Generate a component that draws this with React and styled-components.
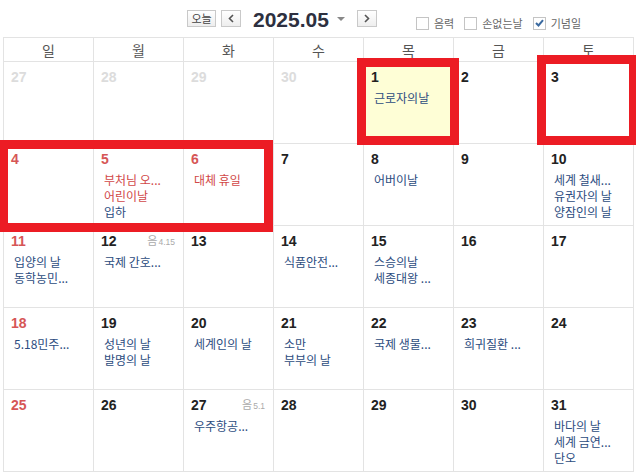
import React from "react";
import styled, { createGlobalStyle } from "styled-components";

const GlobalStyle = createGlobalStyle`
	html, body {
		margin: 0;
		padding: 0;
		background: #fff;
	}
	body {
		font-family: "Noto Sans CJK KR", "Liberation Sans", sans-serif;
		overflow: hidden;
	}
`;

const Page = styled.div`
	position: relative;
	width: 636px;
	height: 476px;
	overflow: hidden;
	background: #fff;
`;

const Toolbar = styled.div`
	display: flex;
	align-items: center;
	height: 37px;
	padding-left: 187px;
	box-sizing: border-box;
`;

const NavButton = styled.button`
	display: flex;
	align-items: center;
	justify-content: center;
	box-sizing: border-box;
	width: ${(p) => p.$w || 20}px;
	height: 17px;
	margin: 0 0 0 ${(p) => p.$ml || 0}px;
	padding: 0;
	border: 1px solid #c9c9c9;
	background: linear-gradient(#ffffff, #eeeeee);
	font-family: "Noto Sans CJK KR", sans-serif;
	font-size: 11px;
	line-height: 15px;
	color: #444;
	cursor: pointer;
`;

const Title = styled.div`
	margin-left: 12px;
	font-family: "Liberation Sans", Arial, sans-serif;
	font-weight: bold;
	font-size: 21px;
	line-height: 24px;
	color: #2d3040;
	margin-top: 2px;
`;

const Caret = styled.span`
	margin-left: 8px;
	width: 0;
	height: 0;
	border-left: 4px solid transparent;
	border-right: 4px solid transparent;
	border-top: 4px solid #888;
	margin-top: 1px;
`;

const Options = styled.div`
	display: flex;
	align-items: center;
	margin-left: 39px;
	margin-top: 9px;
`;

const Check = styled.span`
	display: inline-flex;
	align-items: center;
	justify-content: center;
	width: 13px;
	height: 13px;
	box-sizing: border-box;
	border: 1px solid #c4c4c4;
	background: #fff;
`;

const OptionLabel = styled.span`
	margin-left: 5px;
	margin-right: 10px;
	font-size: 11px;
	line-height: 14px;
	color: #666;
`;

const Grid = styled.div`
	display: grid;
	grid-template-columns: repeat(7, 90px);
	margin-left: 3px;
	width: 631px;
	box-sizing: border-box;
	border-left: 1px solid #e3e3e3;
	border-top: 1px solid #e3e3e3;
`;

const HeadCell = styled.div`
	height: 24px;
	box-sizing: border-box;
	border-right: 1px solid #e3e3e3;
	border-bottom: 1px solid #e3e3e3;
	display: flex;
	align-items: center;
	justify-content: center;
	font-size: 14px;
	color: #555;
`;

const DayCell = styled.div`
	height: 82px;
	box-sizing: border-box;
	border-right: 1px solid #e3e3e3;
	border-bottom: 1px solid #e3e3e3;
	background: ${(p) => (p.$today ? "#fefed6" : "#fff")};
	padding: 6px 8px 0 7px;
	overflow: hidden;
`;

const DateRow = styled.div`
	display: flex;
	justify-content: space-between;
	align-items: flex-start;
`;

const DateNum = styled.span`
	font-family: "Liberation Sans", Arial, sans-serif;
	font-weight: bold;
	font-size: 14px;
	line-height: 18px;
	color: ${(p) => (p.$other ? "#dcdcdc" : p.$red ? "#d65656" : "#222")};
`;

const Lunar = styled.span`
	display: flex;
	align-items: baseline;
	margin-top: 2px;
	font-size: 11px;
	line-height: 13px;
	color: #aaa;
	& b {
		font-weight: normal;
		font-family: "Liberation Sans", Arial, sans-serif;
		font-size: 8.5px;
		margin-left: 1px;
	}
`;

const Events = styled.div`
	margin-top: 4px;
	padding-left: 3px;
`;

const EventItem = styled.div`
	font-size: 12px;
	line-height: 16px;
	white-space: nowrap;
	color: ${(p) => (p.$red ? "#d14848" : "#2c4c80")};
`;

const Marker = styled.div`
	position: absolute;
	left: ${(p) => p.$x}px;
	top: ${(p) => p.$y}px;
	width: ${(p) => p.$w}px;
	height: ${(p) => p.$h}px;
	box-sizing: border-box;
	border: 9px solid #ec1c24;
	pointer-events: none;
`;

const weekdays = ["일", "월", "화", "수", "목", "금", "토"];

const weeks = [
	[
		{ d: 27, other: true },
		{ d: 28, other: true },
		{ d: 29, other: true },
		{ d: 30, other: true },
		{ d: 1, today: true, ev: [{ t: "근로자의날" }] },
		{ d: 2 },
		{ d: 3 },
	],
	[
		{ d: 4, red: true },
		{
			d: 5,
			red: true,
			ev: [{ t: "부처님 오...", red: true }, { t: "어린이날", red: true }, { t: "입하" }],
		},
		{ d: 6, red: true, ev: [{ t: "대체 휴일", red: true }] },
		{ d: 7 },
		{ d: 8, ev: [{ t: "어버이날" }] },
		{ d: 9 },
		{ d: 10, ev: [{ t: "세계 철새..." }, { t: "유권자의 날" }, { t: "양잠인의 날" }] },
	],
	[
		{ d: 11, red: true, ev: [{ t: "입양의 날" }, { t: "동학농민..." }] },
		{ d: 12, lunar: "4.15", ev: [{ t: "국제 간호..." }] },
		{ d: 13 },
		{ d: 14, ev: [{ t: "식품안전..." }] },
		{ d: 15, ev: [{ t: "스승의날" }, { t: "세종대왕 ..." }] },
		{ d: 16 },
		{ d: 17 },
	],
	[
		{ d: 18, red: true, ev: [{ t: "5.18민주..." }] },
		{ d: 19, ev: [{ t: "성년의 날" }, { t: "발명의 날" }] },
		{ d: 20, ev: [{ t: "세계인의 날" }] },
		{ d: 21, ev: [{ t: "소만" }, { t: "부부의 날" }] },
		{ d: 22, ev: [{ t: "국제 생물..." }] },
		{ d: 23, ev: [{ t: "희귀질환 ..." }] },
		{ d: 24 },
	],
	[
		{ d: 25, red: true },
		{ d: 26 },
		{ d: 27, lunar: "5.1", ev: [{ t: "우주항공..." }] },
		{ d: 28 },
		{ d: 29 },
		{ d: 30 },
		{ d: 31, ev: [{ t: "바다의 날" }, { t: "세계 금연..." }, { t: "단오" }] },
	],
];

const Chevron = ({ dir }) => (
	<svg width="6" height="9" viewBox="0 0 6 9">
		<polyline
			points={dir === "left" ? "5,1 1.5,4.5 5,8" : "1,1 4.5,4.5 1,8"}
			fill="none"
			stroke="#555"
			strokeWidth="1.6"
		/>
	</svg>
);

function Option({ label, checked }) {
	return (
		<>
			<Check>
				{checked && (
					<svg width="9" height="8" viewBox="0 0 9 8">
						<polyline
							points="1,4 3.5,6.5 8,1.2"
							fill="none"
							stroke="#3b6aa0"
							strokeWidth="2"
						/>
					</svg>
				)}
			</Check>
			<OptionLabel>{label}</OptionLabel>
		</>
	);
}

function App() {
	return (
		<Page>
			<GlobalStyle />
			<Toolbar>
				<NavButton $w={29}>오늘</NavButton>
				<NavButton $ml={5}>
					<Chevron dir="left" />
				</NavButton>
				<Title>2025.05</Title>
				<Caret />
				<NavButton $ml={12}>
					<Chevron dir="right" />
				</NavButton>
				<Options>
					<Option label="음력" />
					<Option label="손없는날" />
					<Option label="기념일" checked />
				</Options>
			</Toolbar>

			<Grid>
				{weekdays.map((w) => (
					<HeadCell key={w}>{w}</HeadCell>
				))}
				{weeks.flat().map((day, i) => (
					<DayCell key={i} $today={day.today}>
						<DateRow>
							<DateNum $other={day.other} $red={day.red}>
								{day.d}
							</DateNum>
							{day.lunar && (
								<Lunar>
									음<b>{day.lunar}</b>
								</Lunar>
							)}
						</DateRow>
						{day.ev && (
							<Events>
								{day.ev.map((e) => (
									<EventItem key={e.t} $red={e.red}>
										{e.t}
									</EventItem>
								))}
							</Events>
						)}
					</DayCell>
				))}
			</Grid>

			{/* red highlight boxes drawn over the calendar */}
			<Marker $x={357} $y={58} $w={102} $h={87} />
			<Marker $x={537} $y={55} $w={101} $h={90} />
			<Marker $x={-1} $y={140} $w={274} $h={92} />
		</Page>
	);
}

export default App;
